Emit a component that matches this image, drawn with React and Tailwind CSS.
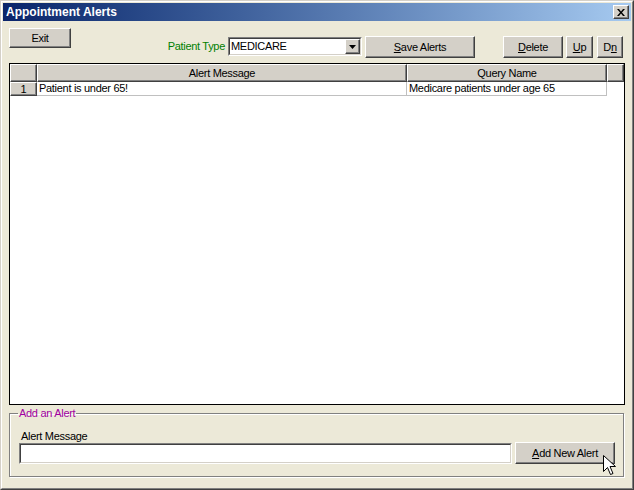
import React from "react";

// classic raised button face
const raised =
  "bg-[#d4d0c8] border border-t-white border-l-white border-r-[#404040] border-b-[#404040] shadow-[inset_-1px_-1px_0_#808080]";

function Btn({ className = "", children }) {
  return (
    <div
      className={`${raised} flex items-center justify-center text-[11px] tracking-[-0.3px] text-black leading-none ${className}`}
    >
      {children}
    </div>
  );
}

function HeaderCell({ className = "", children }) {
  return (
    <div
      className={`${raised} h-full flex items-center justify-center text-[11px] tracking-[-0.3px] text-black leading-none ${className}`}
    >
      {children}
    </div>
  );
}

export default function App() {
  const rows = [
    { id: 1, message: "Patient is under 65!", query: "Medicare patients under age 65" },
  ];

  return (
    <div className="relative w-[634px] h-[490px] bg-[#ece9d8] border border-t-[#d4d0c8] border-l-[#d4d0c8] border-r-[#404040] border-b-[#404040] font-['Liberation_Sans',Arial,sans-serif] select-none">
      <div className="h-full border border-t-white border-l-white border-r-[#808080] border-b-[#808080] p-px flex flex-col">
        {/* Title bar */}
        <div className="h-[18px] shrink-0 flex items-center justify-between pl-[3px] pr-[2px] bg-gradient-to-r from-[#0a246a] to-[#a6caf0]">
          <span className="text-white font-bold text-[12px] leading-none">Appointment Alerts</span>
          <div className={`${raised} w-[16px] h-[14px] flex items-center justify-center`}>
            <svg width="8" height="7" viewBox="0 0 8 7">
              <path d="M0 0h2l2 2.5L6 0h2L5 3.5 8 7H6L4 4.5 2 7H0l3-3.5z" fill="#000" />
            </svg>
          </div>
        </div>

        {/* Toolbar row */}
        <div className="h-[42px] shrink-0 flex items-start">
          <Btn className="ml-[6px] mt-[7px] w-[62px] h-[20px]">Exit</Btn>
          <div className="w-[157px] mt-[16px] h-[19px] flex items-center justify-end pr-[3px] text-[11px] tracking-[-0.3px] text-[#008000]">
            Patient Type
          </div>
          <div className="mt-[16px] w-[134px] h-[19px] border border-t-[#808080] border-l-[#808080] border-r-white border-b-white">
            <div className="h-full bg-white border border-t-[#404040] border-l-[#404040] border-r-[#d4d0c8] border-b-[#d4d0c8] flex items-center">
              <span className="flex-1 pl-[1px] text-[11px] tracking-[-0.3px] leading-none text-black">MEDICARE</span>
              <div className={`${raised} w-[15px] h-full flex items-center justify-center`}>
                <svg width="7" height="4" viewBox="0 0 7 4">
                  <path d="M0 0h7L3.5 4z" fill="#000" />
                </svg>
              </div>
            </div>
          </div>
          <Btn className="ml-[3px] mt-[15px] w-[110px] h-[22px]">
            <span className="underline">S</span>ave Alerts
          </Btn>
          <Btn className="ml-[28px] mt-[15px] w-[60px] h-[22px]">
            <span className="underline">D</span>elete
          </Btn>
          <Btn className="ml-[3px] mt-[15px] w-[27px] h-[22px]">
            <span className="underline">U</span>p
          </Btn>
          <Btn className="ml-[4px] mt-[15px] w-[26px] h-[22px]">
            D<span className="underline">n</span>
          </Btn>
        </div>

        {/* Grid */}
        <div className="ml-[6px] w-[616px] h-[342px] shrink-0 border border-black bg-white flex flex-col">
          <div className="h-[18px] flex">
            <HeaderCell className="w-[27px]" />
            <HeaderCell className="w-[370px]">Alert Message</HeaderCell>
            <HeaderCell className="w-[200px]">Query Name</HeaderCell>
            <HeaderCell className="flex-1" />
          </div>
          {rows.map((r) => (
            <div key={r.id} className="h-[14px] flex">
              <HeaderCell className="w-[27px]">{r.id}</HeaderCell>
              <div className="w-[370px] h-full border-r border-b border-[#c0c0c0] flex items-center pl-[2px] text-[11px] tracking-[-0.3px] leading-none text-black">
                {r.message}
              </div>
              <div className="w-[200px] h-full border-r border-b border-[#c0c0c0] flex items-center pl-[2px] text-[11px] tracking-[-0.3px] leading-none text-black">
                {r.query}
              </div>
            </div>
          ))}
        </div>

        {/* Add an Alert group */}
        <fieldset className="ml-[6px] mt-[2px] w-[615px] h-[70px] shrink-0 border border-[#808080] shadow-[inset_1px_1px_0_#fff,1px_1px_0_#fff] pl-[9px]">
          <legend className="ml-[-1px] px-[1px] text-[11px] tracking-[-0.3px] leading-[12px] text-[#a000a0]">
            Add an Alert
          </legend>
          <div className="mt-[11px] ml-[2px] h-[12px] text-[11px] tracking-[-0.3px] leading-[12px] text-black">
            Alert Message
          </div>
          <div className="flex items-end">
            <div className="w-[493px] h-[21px] border border-t-[#808080] border-l-[#808080] border-r-white border-b-white">
              <div className="h-full bg-white border border-t-[#404040] border-l-[#404040] border-r-[#d4d0c8] border-b-[#d4d0c8]" />
            </div>
            <Btn className="ml-[3px] w-[100px] h-[22px]">
              <span className="underline">A</span>dd New Alert
            </Btn>
          </div>
        </fieldset>
      </div>

      {/* mouse pointer */}
      <svg className="absolute left-[602px] top-[454px]" width="13" height="21" viewBox="0 0 13 21">
        <path d="M0.5 0.5v16l4-4 3 7 2.5-1-3-7h5.5z" fill="#fff" stroke="#000" strokeWidth="1" />
      </svg>
    </div>
  );
}
